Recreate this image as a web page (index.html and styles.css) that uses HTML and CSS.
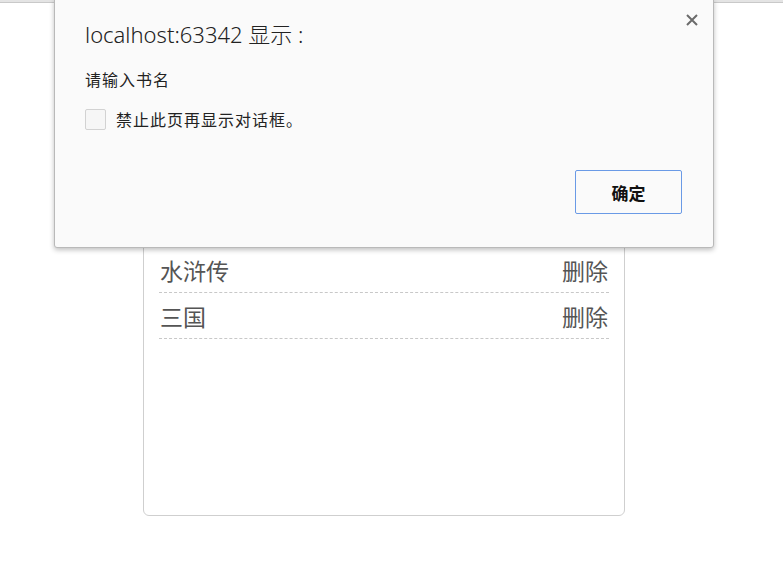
FILE: index.html
```html
<!DOCTYPE html>
<html>
<head>
    <meta charset="utf-8">
    <title>图书列表</title>
    <link rel="stylesheet" href="styles.css">
</head>
<body>
    <div class="topbar"></div>

    <div class="card">
        <div class="card-head">
            <input type="text" class="book-input">
        </div>
        <ul class="book-list">
            <li><span>水浒传</span><a>删除</a></li>
            <li><span>三国</span><a>删除</a></li>
        </ul>
    </div>

    <!-- prompt() dialog -->
    <div class="dialog">
        <svg class="close" width="14" height="14" viewBox="0 0 14 14">
            <path d="M2 2 L12 12 M12 2 L2 12" stroke="#6b6b6b" stroke-width="2" fill="none"/>
        </svg>
        <div class="dialog-title">localhost:63342 显示 :</div>
        <div class="dialog-msg">请输入书名</div>
        <label class="dialog-check">
            <span class="box"></span>
            禁止此页再显示对话框。
        </label>
        <div class="dialog-actions">
            <button>确定</button>
        </div>
    </div>
</body>
</html>
```

FILE: styles.css
```css
body {
    margin: 0;
    background: #fff;
    font-family: "Noto Sans", "Noto Sans CJK SC", sans-serif;
}

.topbar {
    height: 2px;
    background: #e4e4e4;
    border-bottom: 1px solid #c9c9c9;
}

.card {
    width: 450px;
    height: 442px;
    margin: 37px 0 0 143px;
    padding: 16px 15px;
    border: 1px solid #cfcfcf;
    border-radius: 6px;
}

.card-head {
    height: 190px;
}

.book-input {
    width: 100%;
    height: 36px;
    box-sizing: border-box;
    border: 1px solid #ccc;
}

.book-list {
    list-style: none;
    margin: 0;
    padding: 0;
    font-family: "Liberation Serif", "Noto Sans CJK SC", serif;
    font-size: 23px;
    color: #555;
}

.book-list li {
    display: flex;
    justify-content: space-between;
    align-items: center;
    height: 45px;
    padding: 0 1px;
    border-bottom: 1px dashed #c8c8c8;
}

.dialog {
    position: absolute;
    left: 54px;
    top: -1px;
    width: 628px;
    height: 247px;
    padding: 0 0 0 30px;
    background: #fafafa;
    border: 1px solid #b9b9b9;
    border-radius: 0 0 3px 3px;
    box-shadow: 0 2px 5px rgba(0,0,0,0.25);
    color: #222;
}

.close {
    position: absolute;
    right: 14px;
    top: 13px;
}

.dialog-title {
    margin-top: 20px;
    line-height: 28px;
    font-size: 22px;
    font-weight: 300;
}

.dialog-msg {
    margin-top: 22px;
    line-height: 20px;
    font-size: 16px;
    letter-spacing: 1px;
}

.dialog-check {
    display: flex;
    align-items: center;
    margin-top: 18px;
    height: 22px;
    font-size: 16px;
    letter-spacing: 1px;
}

.dialog-check .box {
    width: 19px;
    height: 19px;
    margin-right: 10px;
    background: #f6f6f6;
    border: 1px solid #d2d2d2;
    border-radius: 2px;
}

.dialog-actions {
    display: flex;
    justify-content: flex-end;
    margin-top: 40px;
    padding-right: 31px;
}

.dialog-actions button {
    width: 107px;
    height: 44px;
    background: #fafafa;
    border: 1px solid #6a9ae6;
    border-radius: 2px;
    font-family: "Noto Sans CJK SC", sans-serif;
    font-size: 17px;
    font-weight: bold;
    color: #111;
}
```
